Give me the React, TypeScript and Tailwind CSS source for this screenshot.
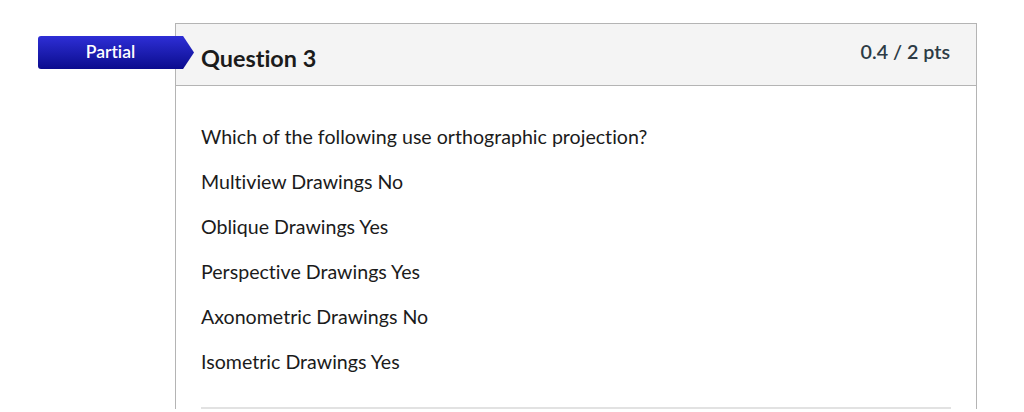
export default function App() {
  const answers = [
    "Multiview Drawings No",
    "Oblique Drawings Yes",
    "Perspective Drawings Yes",
    "Axonometric Drawings No",
    "Isometric Drawings Yes",
  ];

  return (
    <div className="relative h-[412px] w-[1024px] overflow-hidden bg-white font-['Lato','Open_Sans',sans-serif] text-[#1b1b1b] [font-variant-ligatures:none]">
      <div className="ml-[175px] mt-[23px] w-[802px] border border-b-0 border-[#b4b4b4]">
        {/* header */}
        <div className="flex h-[62px] items-start justify-between border-b border-[#b4b4b4] bg-[#f4f4f4] pl-[25px] pr-[26px]">
          <h2 className="pt-[19px] text-[23.4px] font-bold leading-[30px]">Question 3</h2>
          <span className="pt-[15px] text-[19.7px] font-semibold leading-[26px] text-[#2d3b45]">0.4 / 2 pts</span>
        </div>

        {/* body */}
        <div className="px-[25px] pt-[38px]">
          <p className="text-[19.6px] leading-[26px]">Which of the following use orthographic projection?</p>
          <div className="mt-[19px] flex flex-col gap-[19px]">
            {answers.map((a) => (
              <p key={a} className="text-[19.6px] leading-[26px]">{a}</p>
            ))}
          </div>
          <div className="mt-[32px] h-[2px] bg-[#e2e2e2]" />
        </div>
      </div>

      {/* status badge */}
      <div className="absolute left-[38px] top-[36px] flex h-[33px] w-[156px] items-center rounded-l-[3px] bg-gradient-to-b from-[#2e2ed6] to-[#0b0b8e] pr-[11px] [clip-path:polygon(0_0,93%_0,100%_50%,93%_100%,0_100%)]">
        <span className="w-full text-center text-[17.5px] font-semibold text-white">Partial</span>
      </div>
    </div>
  );
}
